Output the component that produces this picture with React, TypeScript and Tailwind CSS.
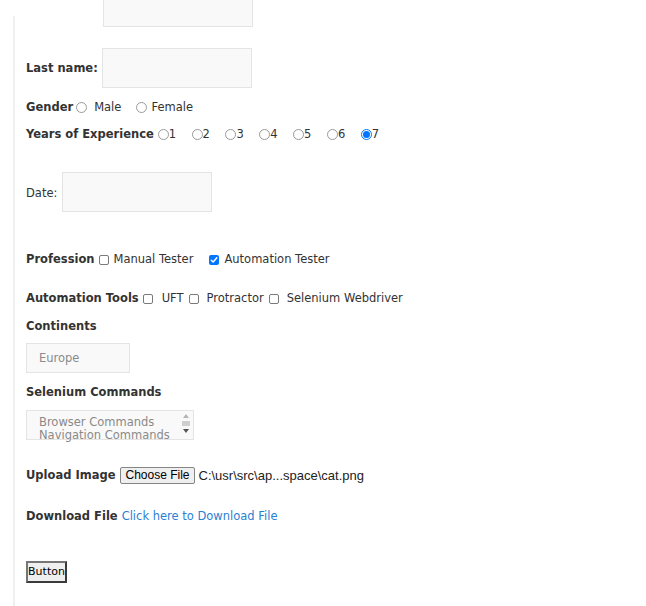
const font = "font-['DejaVu_Sans',sans-serif]";

function Radio({ checked = false, className = "" }: { checked?: boolean; className?: string }) {
  if (checked) {
    return (
      <span className={`flex h-[11px] w-[11px] shrink-0 items-center justify-center rounded-full border border-[#0075ff] bg-white ${className}`}>
        <span className="h-[7px] w-[7px] rounded-full bg-[#0075ff]" />
      </span>
    );
  }
  return <span className={`h-[11px] w-[11px] shrink-0 rounded-full border border-[#9a9a9a] bg-white ${className}`} />;
}

function Check({ checked = false, className = "" }: { checked?: boolean; className?: string }) {
  if (checked) {
    return (
      <span className={`flex h-[10px] w-[10px] shrink-0 items-center justify-center rounded-[2px] bg-[#0075ff] ${className}`}>
        <svg width="8" height="8" viewBox="0 0 8 8" fill="none">
          <path d="M1.3 4.2 L3.2 6 L6.8 1.8" stroke="white" strokeWidth="1.5" strokeLinecap="round" strokeLinejoin="round" />
        </svg>
      </span>
    );
  }
  return <span className={`h-[10px] w-[10px] shrink-0 rounded-[2px] border border-[#7a7a7a] bg-white ${className}`} />;
}

const box = "bg-[#f9f9f9] border border-[#e4e4e4]";
const row = "flex h-[20px] items-center pt-[3px]";

export default function App() {
  const years = ["1", "2", "3", "4", "5", "6", "7"];

  return (
    <div className={`${font} text-[11.5px] text-[#333] bg-white min-h-[606px] overflow-hidden`}>
      <div className="ml-[13px] mt-[16px] flex flex-col border-l-2 border-[#f0f0f0] pl-[11px] pb-[40px]">
        {/* first name (scrolled off) */}
        <div className="-mt-[29px] flex h-[40px] items-center">
          <div className={`ml-[77px] h-[40px] w-[150px] ${box}`} />
        </div>

        <div className="mt-[21px] flex h-[40px] items-center">
          <span className="mt-[2px] font-bold">Last name:</span>
          <div className={`ml-[4px] h-[40px] w-[150px] ${box}`} />
        </div>

        <div className={`mt-[8px] ${row}`}>
          <span className="font-bold">Gender</span>
          <Radio className="ml-[3px]" />
          <span className="ml-[7px]">Male</span>
          <Radio className="ml-[15px]" />
          <span className="ml-[4px]">Female</span>
        </div>

        <div className={`mt-[7px] ${row}`}>
          <span className="font-bold">Years of Experience</span>
          {years.map((y, i) => (
            <span key={y} className={`flex items-center ${i === 0 ? "ml-[4px]" : "ml-[15.5px]"}`}>
              <Radio checked={y === "7"} />
              <span>{y}</span>
            </span>
          ))}
        </div>

        <div className="mt-[29px] flex h-[40px] items-center">
          <span className="mt-[3px]">Date:</span>
          <div className={`ml-[5px] h-[40px] w-[150px] ${box}`} />
        </div>

        <div className={`mt-[36px] ${row}`}>
          <span className="font-bold">Profession</span>
          <Check className="ml-[4px]" />
          <span className="ml-[5px]">Manual Tester</span>
          <Check checked className="ml-[16px]" />
          <span className="ml-[5px]">Automation Tester</span>
        </div>

        <div className={`mt-[19px] ${row}`}>
          <span className="font-bold">Automation Tools</span>
          <Check className="ml-[4px]" />
          <span className="ml-[9px]">UFT</span>
          <Check className="ml-[5px]" />
          <span className="ml-[8px]">Protractor</span>
          <Check className="ml-[5px]" />
          <span className="ml-[8px]">Selenium Webdriver</span>
        </div>

        <div className={`mt-[8px] ${row}`}>
          <span className="font-bold">Continents</span>
        </div>

        <div className={`mt-[8px] flex h-[30px] w-[104px] items-center pl-[12px] pt-[2px] text-[#8a8a8a] ${box}`}>
          Europe
        </div>

        <div className={`mt-[8px] ${row}`}>
          <span className="font-bold">Selenium Commands</span>
        </div>

        <div className={`mt-[9px] flex h-[30px] w-[168px] ${box}`}>
          <div className="flex-1 pl-[12px] pt-[5px] text-[#8a8a8a] leading-[13px]">
            <div>Browser Commands</div>
            <div>Navigation Commands</div>
          </div>
          <div className="flex w-[14px] flex-col items-center pt-[3px]">
            <span className="h-0 w-0 border-x-[3px] border-b-[4px] border-x-transparent border-b-[#b5b5b5]" />
            <span className="mt-[3px] h-[5px] w-[8px] bg-[#cfcfcf]" />
            <span className="mt-[3px] h-0 w-0 border-x-[3px] border-t-[4px] border-x-transparent border-t-[#555]" />
          </div>
        </div>

        <div className="mt-[25px] flex h-[20px] items-center">
          <span className="mt-[2px] font-bold">Upload Image</span>
          <span className="ml-[5px] flex h-[17px] items-center rounded-[2px] border border-[#858585] bg-[#efefef] px-[4px] font-['Liberation_Sans',sans-serif] text-[12px] text-black">
            Choose File
          </span>
          <span className="ml-[4px] mt-[1px] font-['Liberation_Sans',sans-serif] text-[13px] text-[#222]">
            C:\usr\src\ap...space\cat.png
          </span>
        </div>

        <div className={`mt-[20px] ${row}`}>
          <span className="font-bold">Download File</span>
          <a className="ml-[4px] text-[#2a7fd4]" href="#">
            Click here to Download File
          </a>
        </div>

        <div className="mt-[36px] flex">
          <button className="flex h-[22px] w-[41px] items-center justify-center border-2 border-t-[#767676] border-l-[#767676] border-r-[#3a3a3a] border-b-[#3a3a3a] bg-[#efefef] text-[11px] text-black">
            Button
          </button>
        </div>
      </div>
    </div>
  );
}
